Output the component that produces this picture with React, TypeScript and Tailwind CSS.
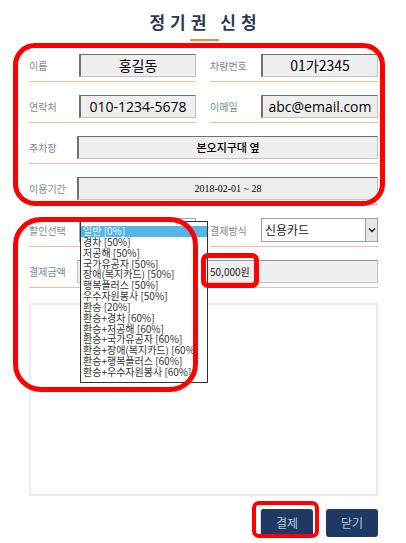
import React from "react";

const Label = ({ children, w = "w-[50px]" }: { children: React.ReactNode; w?: string }) => (
  <div className={`${w} shrink-0 text-[10px] text-[#7a8898]`}>{children}</div>
);

const Box = ({ children, className = "" }: { children?: React.ReactNode; className?: string }) => (
  <div
    className={`flex-1 h-[23px] flex items-center justify-center bg-[#efefef] border border-[#c4c4c4] border-t-[#707070] border-l-2 border-l-[#707070] text-black ${className}`}
  >
    {children}
  </div>
);

const Line = () => <div className="h-[1px] mt-[4px] bg-[#f7bb95]" />;

const items = [
  "일반 [0%]",
  "경차 [50%]",
  "저공해 [50%]",
  "국가유공자 [50%]",
  "장애(복지카드) [50%]",
  "행복플러스 [50%]",
  "우수자원봉사 [50%]",
  "환승 [20%]",
  "환승+경차 [60%]",
  "환승+저공해 [60%]",
  "환승+국가유공자 [60%]",
  "환승+장애(복지카드) [60%]",
  "환승+행복플러스 [60%]",
  "환승+우수자원봉사 [60%]",
];

export default function App() {
  return (
    <div className="relative w-[406px] h-[543px] bg-white overflow-hidden font-['Noto_Sans_CJK_KR',sans-serif]">
      {/* Title */}
      <div className="flex flex-col items-center pt-[12px] h-[41px]">
        <div className="text-[17px] leading-[20px] font-bold tracking-[5px] text-[#2b3a55] pl-[5px]">
          정기권 신청
        </div>
        <div className="mt-[7px] w-[29px] h-[2px] bg-[#f08a3c] ml-[3px]" />
      </div>

      <div className="pl-[29px] pr-[28px] flex flex-col">
        {/* Row 1 */}
        <div className="grid grid-cols-[167px_168px] gap-x-[14px] mt-[13px]">
          <div>
            <div className="flex items-center">
              <Label>이름</Label>
              <Box className="text-[14px]">홍길동</Box>
            </div>
            <Line />
          </div>
          <div>
            <div className="flex items-center">
              <Label w="w-[51px]">차량번호</Label>
              <Box className="text-[14px]">01가2345</Box>
            </div>
            <Line />
          </div>
        </div>

        {/* Row 2 */}
        <div className="grid grid-cols-[167px_168px] gap-x-[14px] mt-[13px]">
          <div>
            <div className="flex items-center">
              <Label>연락처</Label>
              <Box className="text-[14px] font-['Open_Sans',sans-serif]">010-1234-5678</Box>
            </div>
            <Line />
          </div>
          <div>
            <div className="flex items-center">
              <Label w="w-[51px]">이메일</Label>
              <Box className="text-[14px] font-['Open_Sans',sans-serif]">abc@email.com</Box>
            </div>
            <Line />
          </div>
        </div>

        {/* Row 3 */}
        <div className="mt-[13px]">
          <div className="flex items-center">
            <Label w="w-[48px]">주차장</Label>
            <Box className="text-[11px] font-medium text-[#333]">본오지구대 옆</Box>
          </div>
          <Line />
        </div>

        {/* Row 4 */}
        <div className="mt-[13px]">
          <div className="flex items-center">
            <Label w="w-[48px]">이용기간</Label>
            <Box className="text-[10px] font-['Liberation_Serif',serif]">2018-02-01 ~ 28</Box>
          </div>
          <Line />
        </div>

        {/* Row 5 */}
        <div className="grid grid-cols-[167px_168px] gap-x-[14px] mt-[13px]">
          <div>
            <div className="flex items-center h-[24px]">
              <Label>할인선택</Label>
              <div className="flex-1 h-[24px] bg-white border border-[#a8a8a8]" />
            </div>
            <Line />
          </div>
          <div>
            <div className="flex items-center h-[24px]">
              <Label w="w-[51px]">결제방식</Label>
              <div className="flex-1 h-[24px] flex bg-white border border-[#a0a0a0]">
                <div className="flex-1 flex items-center pl-[3px] text-[12px] text-[#222]">신용카드</div>
                <div className="w-[12px] flex items-center justify-center bg-[#e6e6e6] border-l border-[#a0a0a0]">
                  <svg width="8" height="6" viewBox="0 0 8 6">
                    <path d="M1 1.5 L4 4.5 L7 1.5" stroke="#222" strokeWidth="1.4" fill="none" />
                  </svg>
                </div>
              </div>
            </div>
            <Line />
          </div>
        </div>

        {/* Row 6 */}
        <div className="mt-[13px]">
          <div className="flex items-center">
            <Label w="w-[48px]">결제금액</Label>
            <div className="flex-1 h-[23px] flex items-center bg-[#efefef] border border-[#c4c4c4] border-t-[#9a9a9a] pl-[132px] text-[10px] text-[#222]">
              50,000원
            </div>
          </div>
          <Line />
        </div>

        {/* Big box */}
        <div className="mt-[15px] h-[193px] border-2 border-[#ececec] bg-white" />

        {/* Buttons */}
        <div className="flex justify-end gap-[13px] mt-[13px]">
          <button className="w-[53px] h-[27px] rounded-[3px] bg-[#1f3864] border-l border-[#d8dce6] text-[12px] text-[#b9c3d4]">
            결제
          </button>
          <button className="w-[52px] h-[28px] rounded-[3px] bg-[#1f3864] text-[12px] text-[#b9c3d4]">
            닫기
          </button>
        </div>
      </div>

      {/* Open listbox (overlay) */}
      <div className="absolute left-[80px] top-[221px] w-[128px] h-[162px] bg-white border border-[#333] pt-[4px]">
        {items.map((t, i) => (
          <div
            key={t}
            className={`text-[10px] leading-[10.85px] h-[10.85px] px-[2px] whitespace-nowrap ${
              i === 0 ? "bg-[#56b4e6] text-[#eaf6ff]" : "text-[#333]"
            }`}
          >
            {t}
          </div>
        ))}
      </div>

      {/* Red annotations */}
      <div className="absolute left-[13px] top-[43px] w-[372px] h-[163px] border-[5px] border-[#ff0000] rounded-[22px]" />
      <div className="absolute left-[13px] top-[217px] w-[185px] h-[175px] border-[5px] border-[#ff0000] rounded-[28px]" />
      <div className="absolute left-[201px] top-[253px] w-[58px] h-[35px] border-[5px] border-[#ff0000] rounded-[7px]" />
      <div className="absolute left-[252px] top-[501px] w-[67px] h-[37px] border-[4px] border-[#ff0000] rounded-[7px]" />
    </div>
  );
}
